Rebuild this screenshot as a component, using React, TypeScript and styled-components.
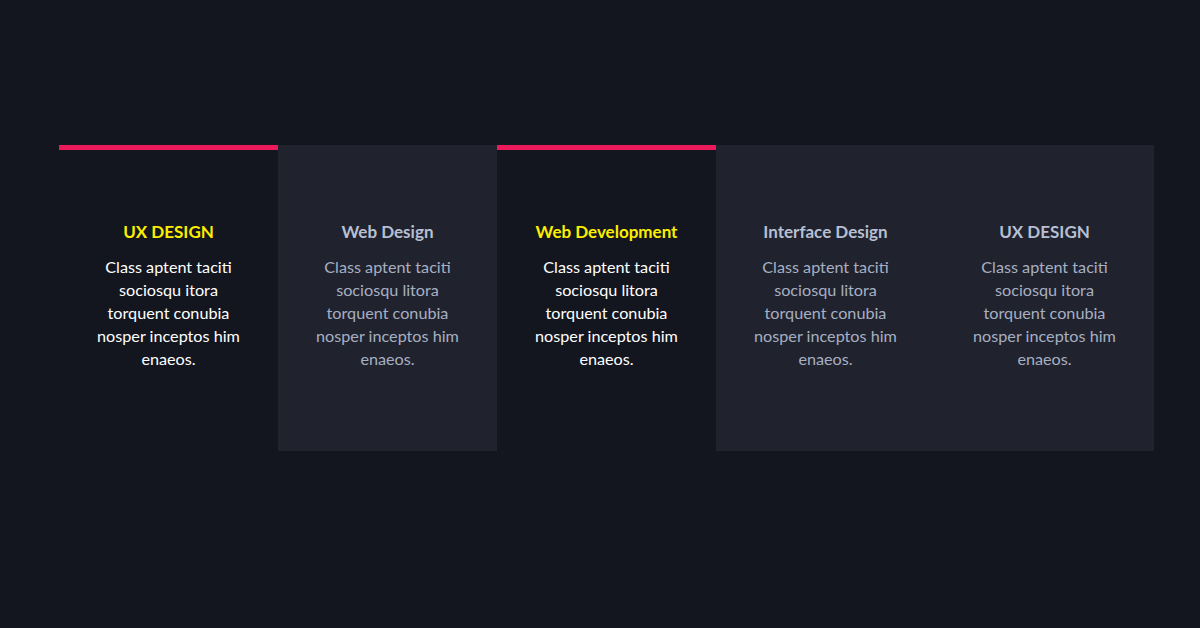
import React from "react";
import styled, { createGlobalStyle } from "styled-components";

const services = [
  { title: "UX DESIGN", text: "Class aptent taciti sociosqu itora torquent conubia nosper inceptos him enaeos.", active: true },
  { title: "Web Design", text: "Class aptent taciti sociosqu litora torquent conubia nosper inceptos him enaeos.", active: false },
  { title: "Web Development", text: "Class aptent taciti sociosqu litora torquent conubia nosper inceptos him enaeos.", active: true },
  { title: "Interface Design", text: "Class aptent taciti sociosqu litora torquent conubia nosper inceptos him enaeos.", active: false },
  { title: "UX DESIGN", text: "Class aptent taciti sociosqu itora torquent conubia nosper inceptos him enaeos.", active: false },
];

function App() {
  return (
    <React.Fragment>
      <GlobalStyle />
      <Page>
        <Row>
          {services.map((item, index) => (
            <Card key={index} $active={item.active}>
              <Title $active={item.active}>{item.title}</Title>
              <Text $active={item.active}>{item.text}</Text>
            </Card>
          ))}
        </Row>
      </Page>
    </React.Fragment>
  );
}

export default App;

const GlobalStyle = createGlobalStyle`
  html, body {
    margin: 0;
    padding: 0;
    background: #13161f;
  }
  body {
    font-family: Lato, "Open Sans", sans-serif;
  }
`;

const Page = styled.div`
  width: 1200px;
  height: 628px;
  background: #13161f;
  padding: 145px 0 0 59px;
  box-sizing: border-box;
`;

const Row = styled.div`
  display: flex;
`;

const Card = styled.div<{ $active: boolean }>`
  width: 219px;
  height: 306px;
  box-sizing: border-box;
  padding: 70px 28px 0;
  text-align: center;
  background: ${(p) => (p.$active ? "#13161f" : "#20232e")};
  border-top: 5px solid ${(p) => (p.$active ? "#ec1a5a" : "#20232e")};
`;

const Title = styled.h3<{ $active: boolean }>`
  margin: 0 0 12px;
  font-size: 17px;
  line-height: 23px;
  font-weight: 700;
  color: ${(p) => (p.$active ? "#fbee00" : "#b7bfd2")};
`;

const Text = styled.p<{ $active: boolean }>`
  margin: 0;
  font-size: 16.2px;
  line-height: 23px;
  color: ${(p) => (p.$active ? "#ffffff" : "#a7afc2")};
`;
